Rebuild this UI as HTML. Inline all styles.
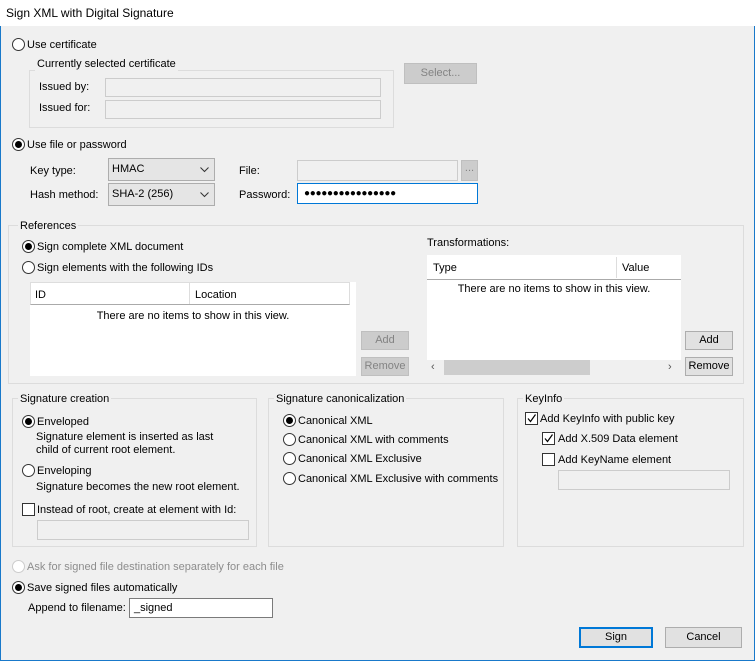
<!DOCTYPE html>
<html><head><style>
*{box-sizing:border-box;margin:0;padding:0}
body{width:755px;height:661px;overflow:hidden;background:#f0f0f0;font-family:"Liberation Sans",sans-serif;font-size:11px;color:#000;position:relative}
.a{position:absolute;white-space:nowrap}
.t{position:absolute;white-space:nowrap;line-height:14px}
.inp{position:absolute;background:#fff;border:1px solid #7a7a7a}
.dis{position:absolute;background:#f0f0f0;border:1px solid #ccc}
.btn{position:absolute;background:#e1e1e1;border:1px solid #adadad;text-align:center;line-height:17px}
.btnd{position:absolute;background:#ccc;border:1px solid #bfbfbf;color:#838383;text-align:center;line-height:17px}
.grp{position:absolute;border:1px solid #dcdcdc}
.gl{position:absolute;background:#f0f0f0;padding:0 2px;line-height:14px;white-space:nowrap}
.r{position:absolute;width:13px;height:13px;border:1px solid #333;border-radius:50%;background:#fff}
.r.on:after{content:"";position:absolute;left:2px;top:2px;width:7px;height:7px;border-radius:50%;background:#000}
.c{position:absolute;width:13px;height:13px;border:1px solid #333;background:#fff}
.c svg{position:absolute;left:0;top:0}
.combo{position:absolute;background:#e5e5e5;border:1px solid #adadad;padding-left:3px;line-height:21px}
.combo svg{position:absolute;right:5px;top:8px}
</style></head><body>
<div class="a" style="left:0;top:0;width:755px;height:26px;background:#fff"></div>
<div class="t" style="left:6px;top:6px;font-size:12px">Sign XML with Digital Signature</div>
<div class="a" style="left:0;top:26px;width:1px;height:635px;background:#1979ca"></div>
<div class="a" style="left:754px;top:26px;width:1px;height:635px;background:#1979ca"></div>
<div class="a" style="left:0;top:660px;width:755px;height:1px;background:#1979ca"></div>

<div class="r" style="left:12px;top:38px"></div><div class="t" style="left:27px;top:38px">Use certificate</div>
<div class="grp" style="left:29px;top:70px;width:365px;height:58px"></div>
<div class="gl" style="left:35px;top:57px">Currently selected certificate</div>
<div class="t" style="left:39px;top:80px">Issued by:</div>
<div class="dis" style="left:105px;top:78px;width:276px;height:19px"></div>
<div class="t" style="left:39px;top:101px">Issued for:</div>
<div class="dis" style="left:105px;top:100px;width:276px;height:19px"></div>
<div class="btnd" style="left:404px;top:63px;width:73px;height:21px;line-height:19px">Select...</div>

<div class="r on" style="left:12px;top:138px"></div><div class="t" style="left:27px;top:138px">Use file or password</div>
<div class="t" style="left:30px;top:164px">Key type:</div>
<div class="combo" style="left:108px;top:158px;width:107px;height:23px">HMAC<svg width="9" height="6"><path d="M0.5 0.5L4.5 4.5L8.5 0.5" stroke="#333" fill="none"/></svg></div>
<div class="t" style="left:30px;top:188px">Hash method:</div>
<div class="combo" style="left:108px;top:183px;width:107px;height:23px">SHA-2 (256)<svg width="9" height="6"><path d="M0.5 0.5L4.5 4.5L8.5 0.5" stroke="#333" fill="none"/></svg></div>
<div class="t" style="left:239px;top:164px">File:</div>
<div class="dis" style="left:297px;top:160px;width:161px;height:21px"></div>
<div class="btnd" style="left:461px;top:160px;width:17px;height:21px;line-height:15px;background:#ccc">...</div>
<div class="t" style="left:239px;top:188px">Password:</div>
<div class="inp" style="left:297px;top:183px;width:181px;height:21px;border-color:#0078d7;font-size:10px;line-height:19px;padding-left:6px;letter-spacing:-0.3px">●●●●●●●●●●●●●●●●</div>

<div class="grp" style="left:8px;top:225px;width:736px;height:159px"></div>
<div class="gl" style="left:18px;top:219px">References</div>
<div class="r on" style="left:22px;top:240px"></div><div class="t" style="left:37px;top:240px">Sign complete XML document</div>
<div class="r" style="left:22px;top:261px"></div><div class="t" style="left:37px;top:261px">Sign elements with the following IDs</div>
<div class="a" style="left:30px;top:282px;width:326px;height:94px;background:#fff"></div>
<div class="a" style="left:30px;top:282px;width:320px;height:23px;background:#fff;border:1px solid #ddd;border-bottom-color:#aaa"></div>
<div class="a" style="left:189px;top:283px;width:1px;height:21px;background:#ddd"></div>
<div class="t" style="left:35px;top:288px">ID</div><div class="t" style="left:195px;top:288px">Location</div>
<div class="t" style="left:30px;top:309px;width:326px;text-align:center">There are no items to show in this view.</div>
<div class="btnd" style="left:361px;top:331px;width:48px;height:19px">Add</div>
<div class="btnd" style="left:361px;top:357px;width:48px;height:19px">Remove</div>

<div class="t" style="left:427px;top:236px">Transformations:</div>
<div class="a" style="left:427px;top:255px;width:254px;height:105px;background:#fff"></div>
<div class="a" style="left:427px;top:255px;width:254px;height:25px;border-bottom:1px solid #aaa"></div>
<div class="a" style="left:616px;top:257px;width:1px;height:21px;background:#ddd"></div>
<div class="t" style="left:433px;top:261px">Type</div><div class="t" style="left:622px;top:261px">Value</div>
<div class="t" style="left:427px;top:282px;width:254px;text-align:center">There are no items to show in this view.</div>
<div class="a" style="left:444px;top:360px;width:146px;height:15px;background:#cdcdcd"></div>
<div class="t" style="left:431px;top:360px;color:#555">‹</div><div class="t" style="left:668px;top:360px;color:#555">›</div>
<div class="btn" style="left:685px;top:331px;width:48px;height:19px">Add</div>
<div class="btn" style="left:685px;top:357px;width:48px;height:19px">Remove</div>

<div class="grp" style="left:12px;top:398px;width:245px;height:149px"></div>
<div class="gl" style="left:18px;top:392px">Signature creation</div>
<div class="r on" style="left:22px;top:415px"></div><div class="t" style="left:37px;top:415px">Enveloped</div>
<div class="t" style="left:36px;top:430px">Signature element is inserted as last</div>
<div class="t" style="left:36px;top:443px">child of current root element.</div>
<div class="r" style="left:22px;top:464px"></div><div class="t" style="left:37px;top:464px">Enveloping</div>
<div class="t" style="left:36px;top:480px">Signature becomes the new root element.</div>
<div class="c" style="left:22px;top:503px"></div><div class="t" style="left:37px;top:503px">Instead of root, create at element with Id:</div>
<div class="dis" style="left:37px;top:520px;width:212px;height:20px"></div>

<div class="grp" style="left:268px;top:398px;width:236px;height:149px"></div>
<div class="gl" style="left:274px;top:392px">Signature canonicalization</div>
<div class="r on" style="left:283px;top:414px"></div><div class="t" style="left:298px;top:414px">Canonical XML</div>
<div class="r" style="left:283px;top:433px"></div><div class="t" style="left:298px;top:433px">Canonical XML with comments</div>
<div class="r" style="left:283px;top:452px"></div><div class="t" style="left:298px;top:452px">Canonical XML Exclusive</div>
<div class="r" style="left:283px;top:472px"></div><div class="t" style="left:298px;top:472px">Canonical XML Exclusive with comments</div>

<div class="grp" style="left:517px;top:398px;width:227px;height:149px"></div>
<div class="gl" style="left:523px;top:392px">KeyInfo</div>
<div class="c" style="left:525px;top:412px"><svg width="11" height="11"><path d="M2 5.5L4.5 8.5L9.5 1.5" stroke="#000" stroke-width="1.2" fill="none"/></svg></div><div class="t" style="left:540px;top:412px">Add KeyInfo with public key</div>
<div class="c" style="left:542px;top:432px"><svg width="11" height="11"><path d="M2 5.5L4.5 8.5L9.5 1.5" stroke="#000" stroke-width="1.2" fill="none"/></svg></div><div class="t" style="left:558px;top:432px">Add X.509 Data element</div>
<div class="c" style="left:542px;top:453px"></div><div class="t" style="left:558px;top:453px">Add KeyName element</div>
<div class="dis" style="left:558px;top:470px;width:172px;height:20px"></div>

<div class="r" style="left:12px;top:560px;border-color:#ccc"></div><div class="t" style="left:27px;top:560px;color:#8d8d8d">Ask for signed file destination separately for each file</div>
<div class="r on" style="left:12px;top:581px"></div><div class="t" style="left:27px;top:581px">Save signed files automatically</div>
<div class="t" style="left:28px;top:601px">Append to filename:</div>
<div class="inp" style="left:129px;top:598px;width:144px;height:20px;line-height:18px;padding-left:4px">_signed</div>

<div class="btn" style="left:579px;top:627px;width:74px;height:21px;border:2px solid #0078d7;line-height:17px">Sign</div>
<div class="btn" style="left:665px;top:627px;width:77px;height:21px;line-height:19px">Cancel</div>
</body></html>
